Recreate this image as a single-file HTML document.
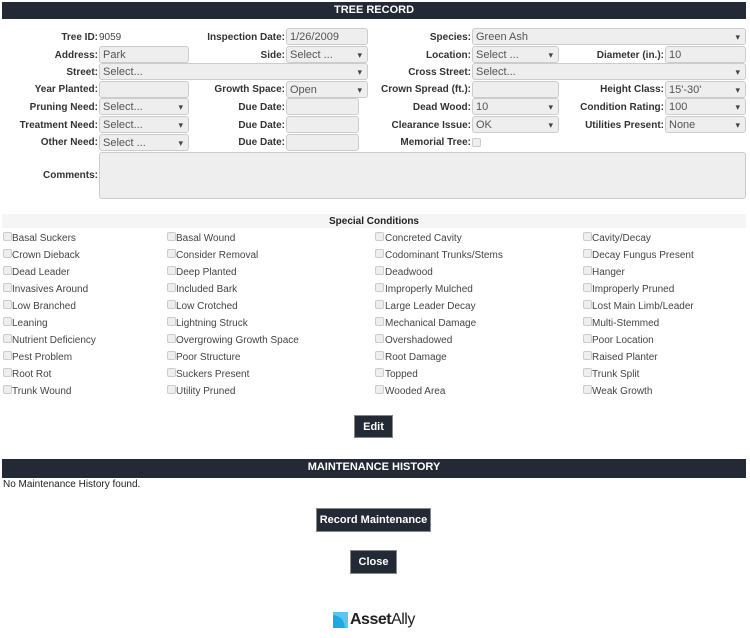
<!DOCTYPE html>
<html><head><meta charset="utf-8"><style>
*{box-sizing:border-box;margin:0;padding:0}
body{width:750px;height:638px;background:#fff;font-family:"Liberation Sans",Arial,sans-serif;font-size:10px;color:#333;position:relative;overflow:hidden}
.a{position:absolute}
.bar{position:absolute;left:2px;width:744px;background:#232a36;color:#fff;font-weight:bold;font-size:11px;text-align:center}
.l{position:absolute;font-weight:bold;color:#333;text-align:right;line-height:12px}
.i{position:absolute;height:17px;background:#eee;border:1px solid #ccc;border-radius:3px;color:#555;font-size:11px;line-height:16px;padding-left:3px}
.s::after{content:"▾";position:absolute;right:5px;top:0;font-size:9px;color:#444}
.cb{position:absolute;width:9px;height:9px;border:1px solid #ccc;background:#eee;border-radius:2px}
.c{position:absolute;font-size:10px;color:#444;line-height:12px}
.btn{position:absolute;background:#232a36;color:#fff;font-weight:bold;font-size:11px;text-align:center;border:1px solid #888}
</style></head><body>
<div class="bar" style="top:2px;height:17px;line-height:17px">TREE RECORD</div>

<div class="l" style="left:0;width:98px;top:32px">Tree ID:</div><div class="a" style="left:99px;top:32px;font-size:10px;color:#444">9059</div>
<div class="l" style="left:150px;width:135px;top:32px">Inspection Date:</div><div class="i" style="left:286px;top:28px;width:82px">1/26/2009</div>
<div class="l" style="left:380px;width:91px;top:32px">Species:</div><div class="i s" style="left:472px;top:28px;width:274px">Green Ash</div>

<div class="l" style="left:0;width:98px;top:50px">Address:</div><div class="i" style="left:99px;top:46px;width:90px">Park</div>
<div class="l" style="left:150px;width:135px;top:50px">Side:</div><div class="i s" style="left:286px;top:46px;width:82px">Select ...</div>
<div class="l" style="left:380px;width:91px;top:50px">Location:</div><div class="i s" style="left:472px;top:46px;width:87px">Select ...</div>
<div class="l" style="left:560px;width:104px;top:50px">Diameter (in.):</div><div class="i" style="left:665px;top:46px;width:81px">10</div>

<div class="l" style="left:0;width:98px;top:67px">Street:</div><div class="i s" style="left:99px;top:63px;width:269px">Select...</div>
<div class="l" style="left:380px;width:91px;top:67px">Cross Street:</div><div class="i s" style="left:472px;top:63px;width:274px">Select...</div>

<div class="l" style="left:0;width:98px;top:84px">Year Planted:</div><div class="i" style="left:99px;top:81px;width:90px"></div>
<div class="l" style="left:150px;width:135px;top:84px">Growth Space:</div><div class="i s" style="left:286px;top:81px;width:82px">Open</div>
<div class="l" style="left:360px;width:111px;top:84px">Crown Spread (ft.):</div><div class="i" style="left:472px;top:81px;width:87px"></div>
<div class="l" style="left:560px;width:104px;top:84px">Height Class:</div><div class="i s" style="left:665px;top:81px;width:81px">15'-30'</div>

<div class="l" style="left:0;width:98px;top:102px">Pruning Need:</div><div class="i s" style="left:99px;top:98px;width:90px">Select...</div>
<div class="l" style="left:150px;width:135px;top:102px">Due Date:</div><div class="i" style="left:286px;top:98px;width:73px"></div>
<div class="l" style="left:380px;width:91px;top:102px">Dead Wood:</div><div class="i s" style="left:472px;top:98px;width:87px">10</div>
<div class="l" style="left:560px;width:104px;top:102px">Condition Rating:</div><div class="i s" style="left:665px;top:98px;width:81px">100</div>

<div class="l" style="left:0;width:98px;top:120px">Treatment Need:</div><div class="i s" style="left:99px;top:116px;width:90px">Select...</div>
<div class="l" style="left:150px;width:135px;top:120px">Due Date:</div><div class="i" style="left:286px;top:116px;width:73px"></div>
<div class="l" style="left:380px;width:91px;top:120px">Clearance Issue:</div><div class="i s" style="left:472px;top:116px;width:87px">OK</div>
<div class="l" style="left:560px;width:104px;top:120px">Utilities Present:</div><div class="i s" style="left:665px;top:116px;width:81px">None</div>

<div class="l" style="left:0;width:98px;top:137px">Other Need:</div><div class="i s" style="left:99px;top:134px;width:90px">Select ...</div>
<div class="l" style="left:150px;width:135px;top:137px">Due Date:</div><div class="i" style="left:286px;top:134px;width:73px"></div>
<div class="l" style="left:380px;width:91px;top:137px">Memorial Tree:</div><div class="cb" style="left:472px;top:138px"></div>

<div class="l" style="left:0;width:98px;top:170px">Comments:</div><div class="i" style="left:99px;top:152px;width:647px;height:47px"></div>

<div class="a" style="left:2px;top:214px;width:744px;height:14px;background:#f5f5f5;text-align:center;font-weight:bold;font-size:10px;line-height:15px;color:#222">Special Conditions</div>

<div class="cb" style="left:3px;top:232px"></div><div class="c" style="left:12px;top:233px">Basal Suckers</div>
<div class="cb" style="left:3px;top:249px"></div><div class="c" style="left:12px;top:250px">Crown Dieback</div>
<div class="cb" style="left:3px;top:266px"></div><div class="c" style="left:12px;top:267px">Dead Leader</div>
<div class="cb" style="left:3px;top:283px"></div><div class="c" style="left:12px;top:284px">Invasives Around</div>
<div class="cb" style="left:3px;top:300px"></div><div class="c" style="left:12px;top:301px">Low Branched</div>
<div class="cb" style="left:3px;top:317px"></div><div class="c" style="left:12px;top:318px">Leaning</div>
<div class="cb" style="left:3px;top:334px"></div><div class="c" style="left:12px;top:335px">Nutrient Deficiency</div>
<div class="cb" style="left:3px;top:351px"></div><div class="c" style="left:12px;top:352px">Pest Problem</div>
<div class="cb" style="left:3px;top:368px"></div><div class="c" style="left:12px;top:369px">Root Rot</div>
<div class="cb" style="left:3px;top:385px"></div><div class="c" style="left:12px;top:386px">Trunk Wound</div>

<div class="cb" style="left:167px;top:232px"></div><div class="c" style="left:176px;top:233px">Basal Wound</div>
<div class="cb" style="left:167px;top:249px"></div><div class="c" style="left:176px;top:250px">Consider Removal</div>
<div class="cb" style="left:167px;top:266px"></div><div class="c" style="left:176px;top:267px">Deep Planted</div>
<div class="cb" style="left:167px;top:283px"></div><div class="c" style="left:176px;top:284px">Included Bark</div>
<div class="cb" style="left:167px;top:300px"></div><div class="c" style="left:176px;top:301px">Low Crotched</div>
<div class="cb" style="left:167px;top:317px"></div><div class="c" style="left:176px;top:318px">Lightning Struck</div>
<div class="cb" style="left:167px;top:334px"></div><div class="c" style="left:176px;top:335px">Overgrowing Growth Space</div>
<div class="cb" style="left:167px;top:351px"></div><div class="c" style="left:176px;top:352px">Poor Structure</div>
<div class="cb" style="left:167px;top:368px"></div><div class="c" style="left:176px;top:369px">Suckers Present</div>
<div class="cb" style="left:167px;top:385px"></div><div class="c" style="left:176px;top:386px">Utility Pruned</div>

<div class="cb" style="left:375px;top:232px"></div><div class="c" style="left:385px;top:233px">Concreted Cavity</div>
<div class="cb" style="left:375px;top:249px"></div><div class="c" style="left:385px;top:250px">Codominant Trunks/Stems</div>
<div class="cb" style="left:375px;top:266px"></div><div class="c" style="left:385px;top:267px">Deadwood</div>
<div class="cb" style="left:375px;top:283px"></div><div class="c" style="left:385px;top:284px">Improperly Mulched</div>
<div class="cb" style="left:375px;top:300px"></div><div class="c" style="left:385px;top:301px">Large Leader Decay</div>
<div class="cb" style="left:375px;top:317px"></div><div class="c" style="left:385px;top:318px">Mechanical Damage</div>
<div class="cb" style="left:375px;top:334px"></div><div class="c" style="left:385px;top:335px">Overshadowed</div>
<div class="cb" style="left:375px;top:351px"></div><div class="c" style="left:385px;top:352px">Root Damage</div>
<div class="cb" style="left:375px;top:368px"></div><div class="c" style="left:385px;top:369px">Topped</div>
<div class="cb" style="left:375px;top:385px"></div><div class="c" style="left:385px;top:386px">Wooded Area</div>

<div class="cb" style="left:583px;top:232px"></div><div class="c" style="left:592px;top:233px">Cavity/Decay</div>
<div class="cb" style="left:583px;top:249px"></div><div class="c" style="left:592px;top:250px">Decay Fungus Present</div>
<div class="cb" style="left:583px;top:266px"></div><div class="c" style="left:592px;top:267px">Hanger</div>
<div class="cb" style="left:583px;top:283px"></div><div class="c" style="left:592px;top:284px">Improperly Pruned</div>
<div class="cb" style="left:583px;top:300px"></div><div class="c" style="left:592px;top:301px">Lost Main Limb/Leader</div>
<div class="cb" style="left:583px;top:317px"></div><div class="c" style="left:592px;top:318px">Multi-Stemmed</div>
<div class="cb" style="left:583px;top:334px"></div><div class="c" style="left:592px;top:335px">Poor Location</div>
<div class="cb" style="left:583px;top:351px"></div><div class="c" style="left:592px;top:352px">Raised Planter</div>
<div class="cb" style="left:583px;top:368px"></div><div class="c" style="left:592px;top:369px">Trunk Split</div>
<div class="cb" style="left:583px;top:385px"></div><div class="c" style="left:592px;top:386px">Weak Growth</div>

<div class="btn" style="left:354px;top:415px;width:39px;height:23px;line-height:22px">Edit</div>

<div class="bar" style="top:459px;height:19px;line-height:17px">MAINTENANCE HISTORY</div>
<div class="a" style="left:3px;top:479px;font-size:10px;color:#222">No Maintenance History found.</div>

<div class="btn" style="left:316px;top:508px;width:115px;height:24px;line-height:23px">Record Maintenance</div>
<div class="btn" style="left:350px;top:550px;width:47px;height:24px;line-height:23px">Close</div>

<svg class="a" style="left:333px;top:612px" width="15" height="16" viewBox="0 0 15 16"><path d="M0 0H15V16H0Z" fill="#1fa9e1"/><path d="M0 3Q11 4 12 16H15V0H0Z" fill="#5cc5f0"/></svg>
<div class="a" style="left:350px;top:611px;font-size:16px;color:#222;letter-spacing:-0.5px"><b>Asset</b>Ally</div>
</body></html>
